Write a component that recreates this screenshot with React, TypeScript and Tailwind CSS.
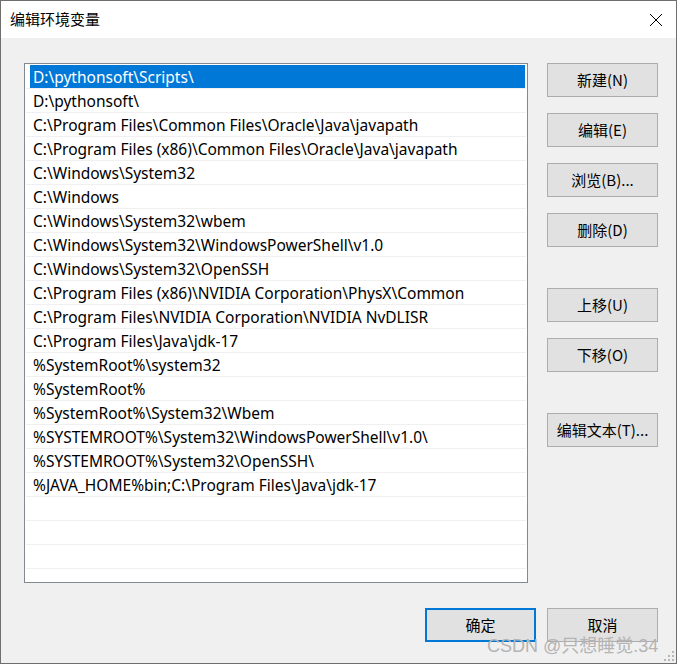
import React from "react";

const items = [
  "D:\\pythonsoft\\Scripts\\",
  "D:\\pythonsoft\\",
  "C:\\Program Files\\Common Files\\Oracle\\Java\\javapath",
  "C:\\Program Files (x86)\\Common Files\\Oracle\\Java\\javapath",
  "C:\\Windows\\System32",
  "C:\\Windows",
  "C:\\Windows\\System32\\wbem",
  "C:\\Windows\\System32\\WindowsPowerShell\\v1.0",
  "C:\\Windows\\System32\\OpenSSH",
  "C:\\Program Files (x86)\\NVIDIA Corporation\\PhysX\\Common",
  "C:\\Program Files\\NVIDIA Corporation\\NVIDIA NvDLISR",
  "C:\\Program Files\\Java\\jdk-17",
  "%SystemRoot%\\system32",
  "%SystemRoot%",
  "%SystemRoot%\\System32\\Wbem",
  "%SYSTEMROOT%\\System32\\WindowsPowerShell\\v1.0\\",
  "%SYSTEMROOT%\\System32\\OpenSSH\\",
  "%JAVA_HOME%bin;C:\\Program Files\\Java\\jdk-17",
  "",
  "",
  "",
  "",
];

function Btn({ label, primary }: { label: string; primary?: boolean }) {
  return (
    <div
      className={
        "w-[111px] h-[34px] flex items-center justify-center bg-[#e1e1e1] text-[15px] text-black " +
        (primary ? "border-2 border-[#0078d7]" : "border border-[#adadad]")
      }
    >
      {label}
    </div>
  );
}

export default function App() {
  return (
    <div
      className="relative w-[677px] h-[664px] border border-[#6e6e6e] bg-[#f0f0f0] flex flex-col overflow-hidden"
      style={{ fontFamily: '"Noto Sans", "Noto Sans CJK SC", sans-serif' }}
    >
      <div className="h-[37px] bg-white flex items-center justify-between pl-[9px] pr-[13px] shrink-0">
        <span className="text-[15px] text-black" style={{ fontFamily: '"Noto Sans CJK SC", sans-serif' }}>
          编辑环境变量
        </span>
        <svg width="14" height="14" viewBox="0 0 14 14">
          <path d="M1 1L13 13M13 1L1 13" stroke="#000" strokeWidth="1" />
        </svg>
      </div>
      <div className="flex pl-[23px] pt-[25px]">
        <div className="w-[504px] h-[520px] border border-[#828790] bg-white pt-[1px] px-[1px] overflow-hidden">
          {items.map((t, i) => (
            <div key={i} className="h-[24px] border-b border-[#f0f0f0] flex">
              {i === 0 ? (
                <div className="ml-[4px] mr-[1px] flex-1 bg-[#0078d7] text-white text-[15.5px] leading-[24px] pl-[3px] whitespace-nowrap">
                  {t}
                </div>
              ) : (
                <div className="ml-[4px] flex-1 text-black text-[15.5px] leading-[24px] pl-[3px] whitespace-nowrap">
                  {t}
                </div>
              )}
            </div>
          ))}
        </div>
        <div className="ml-[19px] flex flex-col" style={{ fontFamily: '"Noto Sans CJK SC", sans-serif' }}>
          <div className="flex flex-col gap-[16px]">
            <Btn label="新建(N)" />
            <Btn label="编辑(E)" />
            <Btn label="浏览(B)..." />
            <Btn label="删除(D)" />
          </div>
          <div className="mt-[41px] flex flex-col gap-[16px]">
            <Btn label="上移(U)" />
            <Btn label="下移(O)" />
          </div>
          <div className="mt-[41px]">
            <Btn label="编辑文本(T)..." />
          </div>
        </div>
      </div>
      <div className="flex justify-end gap-[11px] pr-[18px] mt-[25px]" style={{ fontFamily: '"Noto Sans CJK SC", sans-serif' }}>
        <Btn label="确定" primary />
        <Btn label="取消" />
      </div>
      <div
        className="absolute left-[486px] top-[636px] text-[18px] text-[#b4b4b4] leading-none whitespace-nowrap"
        style={{ fontFamily: '"Liberation Sans", "Noto Sans CJK SC", sans-serif' }}
      >
        CSDN @只想睡觉.34
      </div>
      <svg className="absolute right-[1px] bottom-[1px]" width="12" height="12" viewBox="0 0 12 12">
        <rect x="9" y="1" width="2" height="2" fill="#b8b8b8" />
        <rect x="5" y="5" width="2" height="2" fill="#b8b8b8" />
        <rect x="9" y="5" width="2" height="2" fill="#b8b8b8" />
        <rect x="1" y="9" width="2" height="2" fill="#b8b8b8" />
        <rect x="5" y="9" width="2" height="2" fill="#b8b8b8" />
        <rect x="9" y="9" width="2" height="2" fill="#b8b8b8" />
      </svg>
    </div>
  );
}
